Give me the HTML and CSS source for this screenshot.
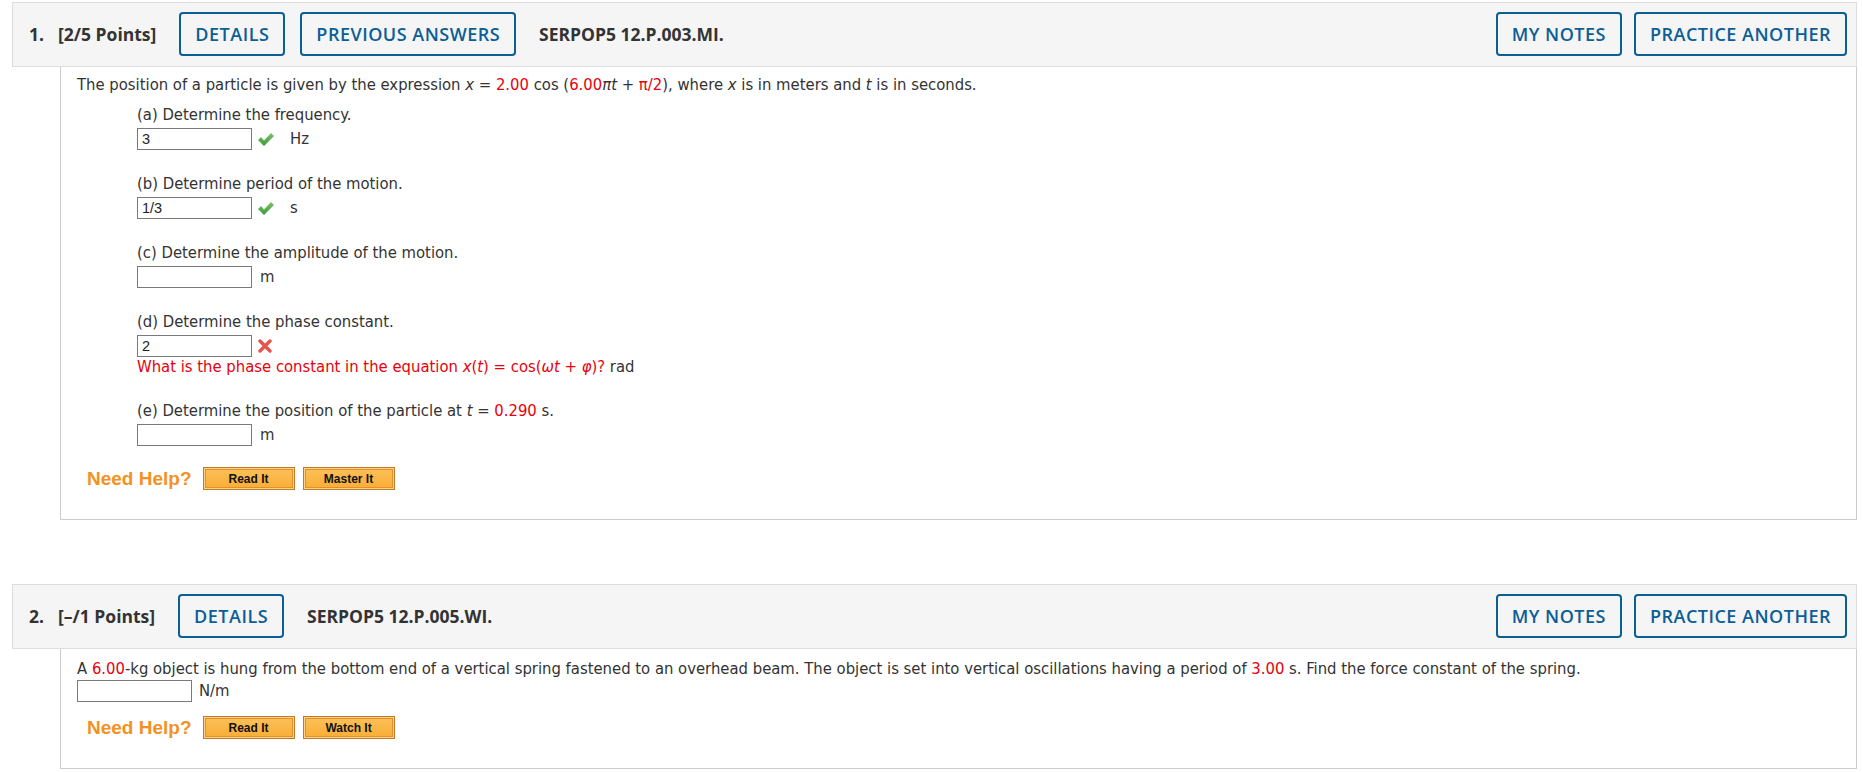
FILE: index.html
```html
<!DOCTYPE html>
<html lang="en">
<head>
<meta charset="utf-8">
<title>WebAssign</title>
<link rel="stylesheet" href="styles.css">
</head>
<body>
<div class="page">
  <section class="question">
    <header class="qhead">
      <div class="qtitle"><span class="qnum">1.</span><span class="qpts">[2/5 Points]</span></div>
      <button class="hbtn">DETAILS</button>
      <button class="hbtn">PREVIOUS ANSWERS</button>
      <span class="qcode">SERPOP5 12.P.003.MI.</span>
      <span class="spacer"></span>
      <button class="hbtn">MY NOTES</button>
      <button class="hbtn">PRACTICE ANOTHER</button>
    </header>
    <div class="qbody">
      <p class="stem">The position of a particle is given by the expression <i>x</i> = <span class="red">2.00</span> cos (<span class="red">6.00</span><i>πt</i> + <span class="red">π/2</span>), where <i>x</i> is in meters and <i>t</i> is in seconds.</p>
      <div class="parts">
        <div class="part">
          <div class="plabel">(a) Determine the frequency.</div>
          <div class="prow">
            <span class="ans">3</span>
            <svg class="ok" viewBox="0 0 18 16" width="18" height="16"><defs><linearGradient id="g1" x1="0" y1="0" x2="0" y2="1"><stop offset="0" stop-color="#7cc36b"/><stop offset="1" stop-color="#3c9a3a"/></linearGradient></defs><path d="M1 9 L4 6 L7 9.5 L14 2 L17 5 L7 15 Z" fill="url(#g1)"/></svg>
            <span class="unit unit-icon">Hz</span>
          </div>
        </div>
        <div class="part">
          <div class="plabel">(b) Determine period of the motion.</div>
          <div class="prow">
            <span class="ans">1/3</span>
            <svg class="ok" viewBox="0 0 18 16" width="18" height="16"><defs><linearGradient id="g2" x1="0" y1="0" x2="0" y2="1"><stop offset="0" stop-color="#7cc36b"/><stop offset="1" stop-color="#3c9a3a"/></linearGradient></defs><path d="M1 9 L4 6 L7 9.5 L14 2 L17 5 L7 15 Z" fill="url(#g2)"/></svg>
            <span class="unit unit-icon">s</span>
          </div>
        </div>
        <div class="part">
          <div class="plabel">(c) Determine the amplitude of the motion.</div>
          <div class="prow">
            <span class="ans"></span>
            <span class="unit">m</span>
          </div>
        </div>
        <div class="part">
          <div class="plabel">(d) Determine the phase constant.</div>
          <div class="prow">
            <span class="ans">2</span>
            <svg class="bad" viewBox="0 0 14 14" width="14" height="14"><path d="M2 2 L12 12 M12 2 L2 12" stroke="#e5534b" stroke-width="3.4" stroke-linecap="round"/></svg>
          </div>
          <div class="hint"><span class="red">What is the phase constant in the equation <i>x</i>(<i>t</i>) = cos(<i>ωt</i> + <i>φ</i>)?</span> rad</div>
        </div>
        <div class="part part-last">
          <div class="plabel">(e) Determine the position of the particle at <i>t</i> = <span class="red">0.290</span> s.</div>
          <div class="prow">
            <span class="ans"></span>
            <span class="unit">m</span>
          </div>
        </div>
      </div>
      <div class="help">
        <span class="help-label">Need Help?</span>
        <button class="helpbtn">Read It</button>
        <button class="helpbtn">Master It</button>
      </div>
    </div>
  </section>

  <section class="question q2">
    <header class="qhead">
      <div class="qtitle"><span class="qnum">2.</span><span class="qpts">[–/1 Points]</span></div>
      <button class="hbtn">DETAILS</button>
      <span class="qcode">SERPOP5 12.P.005.WI.</span>
      <span class="spacer"></span>
      <button class="hbtn">MY NOTES</button>
      <button class="hbtn">PRACTICE ANOTHER</button>
    </header>
    <div class="qbody qbody-2">
      <p class="stem">A <span class="red">6.00</span>-kg object is hung from the bottom end of a vertical spring fastened to an overhead beam. The object is set into vertical oscillations having a period of <span class="red">3.00</span> s. Find the force constant of the spring.</p>
      <div class="prow prow-flush">
        <span class="ans"></span>
        <span class="unit unit-near">N/m</span>
      </div>
      <div class="help help-near">
        <span class="help-label">Need Help?</span>
        <button class="helpbtn">Read It</button>
        <button class="helpbtn">Watch It</button>
      </div>
    </div>
  </section>
</div>
</body>
</html>
```

FILE: styles.css
```css
html, body {
  margin: 0;
  padding: 0;
  background: #ffffff;
}

.page {
  padding: 2px 5px 0 12px;
  font-family: "DejaVu Sans Condensed", "Liberation Sans", Arial, sans-serif;
  font-size: 16.5px;
  color: #333333;
}

.question.q2 {
  margin-top: 64px;
}

.qhead {
  display: flex;
  align-items: center;
  gap: 15px;
  background: #f5f5f5;
  border: 1px solid #dddddd;
  padding: 9px 9px 10px 16px;
  font-family: "Open Sans", "Liberation Sans", sans-serif;
  font-weight: 700;
  font-size: 17.5px;
  color: #333333;
}

.qtitle {
  display: flex;
  gap: 14px;
  margin-right: 8px;
}

.qcode {
  margin-left: 8px;
}

.spacer {
  flex: 1;
}

.hbtn {
  height: 44px;
  box-sizing: border-box;
  padding: 0 14px;
  border: 2px solid #0b5e96;
  border-radius: 4px;
  background: transparent;
  color: #0b5e96;
  font-family: "Open Sans", "Liberation Sans", sans-serif;
  font-weight: 600;
  font-size: 18px;
  letter-spacing: 0.5px;
}

.qhead .spacer + .hbtn {
  margin-right: -3px;
}

.qbody {
  margin-left: 48px;
  border: 1px solid #cccccc;
  border-top: none;
  padding: 8px 16px 29px 16px;
}

.qbody-2 {
  padding-top: 10px;
}

.stem {
  margin: 0;
  line-height: 20px;
}

.red {
  color: #e8000b;
}

i {
  font-style: italic;
}

.parts {
  margin: 10px 0 0 60px;
}

.part {
  margin-bottom: 24px;
}

.part-last {
  margin-bottom: 21px;
}

.plabel {
  line-height: 20px;
}

.prow {
  display: flex;
  align-items: center;
  height: 23px;
  margin-top: 2px;
}

.ans {
  display: inline-block;
  box-sizing: border-box;
  width: 115px;
  height: 22px;
  border: 1px solid #7a7a7a;
  padding: 0 4px;
  font-family: "Liberation Sans", Arial, sans-serif;
  font-size: 14.5px;
  line-height: 20px;
  color: #222222;
}

.ok {
  margin-left: 5px;
}

.bad {
  margin-left: 6px;
}

.unit {
  margin-left: 8px;
}

.unit-icon {
  margin-left: 15px;
}

.hint {
  line-height: 20px;
}

.help {
  display: flex;
  align-items: center;
  margin-left: 10px;
}

.help-label {
  font-family: "Liberation Sans", Arial, sans-serif;
  font-weight: 700;
  font-size: 19px;
  color: #f39222;
  margin-right: 11px;
}

.helpbtn {
  width: 92px;
  height: 23px;
  box-sizing: border-box;
  margin-right: 8px;
  padding: 0;
  border: 1px solid #c47a22;
  background: linear-gradient(#fcc15a, #f9ad35);
  box-shadow: inset 0 0 0 1px #fdd48c, inset 0 0 0 2px #e0912e;
  font-family: "Liberation Sans", Arial, sans-serif;
  font-weight: 700;
  font-size: 12px;
  color: #111111;
}

.prow-flush {
  margin-top: 0;
}

.unit-near {
  margin-left: 7px;
}

.help-near {
  margin-top: 14px;
}
```
